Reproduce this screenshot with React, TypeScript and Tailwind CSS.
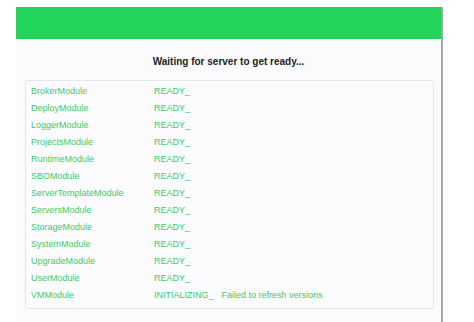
const modules: { name: string; status: string; note?: string }[] = [
  { name: "BrokerModule", status: "READY_" },
  { name: "DeployModule", status: "READY_" },
  { name: "LoggerModule", status: "READY_" },
  { name: "ProjectsModule", status: "READY_" },
  { name: "RuntimeModule", status: "READY_" },
  { name: "SBOModule", status: "READY_" },
  { name: "ServerTemplateModule", status: "READY_" },
  { name: "ServersModule", status: "READY_" },
  { name: "StorageModule", status: "READY_" },
  { name: "SystemModule", status: "READY_" },
  { name: "UpgradeModule", status: "READY_" },
  { name: "UserModule", status: "READY_" },
  { name: "VMModule", status: "INITIALIZING_", note: "Failed to refresh versions" },
];

export default function App() {
  return (
    <div className="w-[474px] h-[322px] bg-white pt-[7px] pl-[16px] overflow-hidden font-['Liberation_Sans',Arial,sans-serif]">
      <div className="w-[427px] h-[315px] flex flex-col bg-[#fbfbfd] border-r-2 border-[#a2a2ac]">
        <div className="h-[32px] bg-[#24d45a]" />
        <div className="pt-[17px] text-center text-[10px] leading-[12px] font-bold text-[#222]">
          Waiting for server to get ready...
        </div>
        <div className="mt-[12px] ml-[9px] mr-[7px] h-[229px] rounded-[3px] border border-[#e4e4ea] bg-[#fcfcfe] pt-[2px] pl-[5px]">
          {modules.map((m) => (
            <div key={m.name} className="flex h-[17px] items-center text-[9px] text-[#45c862]">
              <span className="w-[123px]">{m.name}</span>
              <span>{m.status}</span>
              {m.note && <span className="ml-[8px]">{m.note}</span>}
            </div>
          ))}
        </div>
      </div>
    </div>
  );
}
